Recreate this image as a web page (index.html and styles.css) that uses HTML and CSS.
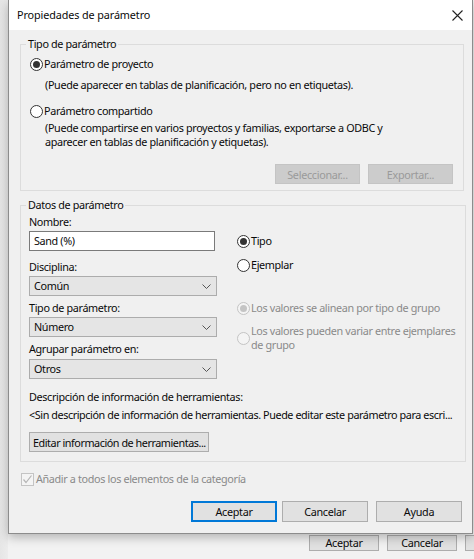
FILE: index.html
```html
<!DOCTYPE html>
<html lang="es">
<head>
    <meta charset="UTF-8">
    <title>Propiedades de parámetro</title>
    <link rel="stylesheet" href="styles.css">
</head>
<body>
    <div class="dialog">
        <div class="titlebar">
            <span class="title">Propiedades de parámetro</span>
            <svg class="close" width="11" height="11" viewBox="0 0 11 11">
                <path d="M0.5 0.5 L10.5 10.5 M10.5 0.5 L0.5 10.5" stroke="#222" stroke-width="1.1" fill="none"/>
            </svg>
        </div>

        <div class="dialog-body">
            <!-- Tipo de parámetro -->
            <fieldset class="group">
                <legend>Tipo de parámetro</legend>
                <div class="group-inner tipo">
                    <div class="radio-row">
                        <span class="radio checked"></span>
                        <span>Parámetro de proyecto</span>
                    </div>
                    <p class="desc desc-1">(Puede aparecer en tablas de planificación, pero no en etiquetas).</p>
                    <div class="radio-row row-2">
                        <span class="radio"></span>
                        <span>Parámetro compartido</span>
                    </div>
                    <p class="desc desc-2">(Puede compartirse en varios proyectos y familias, exportarse a ODBC y<br>aparecer en tablas de planificación y etiquetas).</p>
                    <div class="btn-row">
                        <button class="btn disabled">Seleccionar...</button>
                        <button class="btn disabled">Exportar...</button>
                    </div>
                </div>
            </fieldset>

            <!-- Datos de parámetro -->
            <fieldset class="group group-datos">
                <legend>Datos de parámetro</legend>
                <div class="group-inner datos">
                    <div class="cols">
                        <div class="col-left">
                            <div class="label">Nombre:</div>
                            <div class="textbox">Sand (%)</div>

                            <div class="label lbl-disciplina">Disciplina:</div>
                            <div class="select">
                                <span>Común</span>
                                <svg width="9" height="5" viewBox="0 0 9 5"><polyline points="0.5,0.5 4.5,4.5 8.5,0.5" stroke="#555" fill="none"/></svg>
                            </div>

                            <div class="label lbl-next">Tipo de parámetro:</div>
                            <div class="select">
                                <span>Número</span>
                                <svg width="9" height="5" viewBox="0 0 9 5"><polyline points="0.5,0.5 4.5,4.5 8.5,0.5" stroke="#555" fill="none"/></svg>
                            </div>

                            <div class="label lbl-next">Agrupar parámetro en:</div>
                            <div class="select select-last">
                                <span>Otros</span>
                                <svg width="9" height="5" viewBox="0 0 9 5"><polyline points="0.5,0.5 4.5,4.5 8.5,0.5" stroke="#555" fill="none"/></svg>
                            </div>
                        </div>

                        <div class="col-right">
                            <div class="radio-row">
                                <span class="radio checked"></span>
                                <span>Tipo</span>
                            </div>
                            <div class="radio-row row-ejemplar">
                                <span class="radio"></span>
                                <span>Ejemplar</span>
                            </div>
                            <div class="radio-row row-grupo1 off">
                                <span class="radio checked"></span>
                                <span>Los valores se alinean por tipo de grupo</span>
                            </div>
                            <div class="radio-row row-grupo2 off">
                                <span class="radio"></span>
                                <span class="two-lines">Los valores pueden variar entre ejemplares<br>de grupo</span>
                            </div>
                        </div>
                    </div>

                    <div class="label lbl-desc">Descripción de información de herramientas:</div>
                    <div class="label lbl-sin">&lt;Sin descripción de información de herramientas. Puede editar este parámetro para escri...</div>
                    <button class="btn btn-editar">Editar información de herramientas...</button>
                </div>
            </fieldset>

            <div class="check-row">
                <span class="checkbox">
                    <svg width="11" height="11" viewBox="0 0 11 11"><polyline points="1.5,5.5 4,8.5 9.5,1.5" stroke="#b5b5b5" stroke-width="1.2" fill="none"/></svg>
                </span>
                <span>Añadir a todos los elementos de la categoría</span>
            </div>

            <div class="footer">
                <button class="btn btn-ok">Aceptar</button>
                <button class="btn btn-cancel">Cancelar</button>
                <button class="btn btn-help">Ayuda</button>
            </div>
        </div>
    </div>

    <div class="back-buttons">
        <button class="btn btn-back">Aceptar</button>
        <button class="btn btn-back">Cancelar</button>
        <button class="btn btn-back btn-cut"></button>
    </div>
</body>
</html>
```

FILE: styles.css
```css
/* Reset básico */
* {
    margin: 0;
    padding: 0;
    box-sizing: border-box;
}

body {
    font-family: "Noto Sans", Arial, sans-serif;
    font-size: 10.8px;
    letter-spacing: -0.35px;
    line-height: 14px;
    color: #0a0a0a;
    background-color: #f2f2f2;
    width: 474px;
    height: 559px;
    overflow: hidden;
    background-image: linear-gradient(to right, #e6e6e6 0, #ececec 8px, #f2f2f2 8px);
}

/* Ventana */
.dialog {
    margin-left: 8px;
    width: 465px;
    background-color: #f0f0f0;
    border: 1px solid #8c8c8c;
    border-top: none;
    box-shadow: 0 3px 10px rgba(0, 0, 0, 0.28);
    position: relative;
}

.titlebar {
    height: 30px;
    background-color: #fff;
    display: flex;
    align-items: center;
    justify-content: space-between;
    padding: 0 9px 0 8px;
}

.title {
    letter-spacing: -0.1px;
}

.dialog-body {
    padding: 7px 8px 11px 11px;
}

/* Grupos */
.group {
    border: 1px solid #dcdcdc;
    padding: 0;
}

.group legend {
    margin-left: 5px;
    padding: 0 2px;
    line-height: 14px;
}

.group-datos {
    margin-top: 7px;
}

.group-inner.tipo {
    padding: 5px 10px 6px 9px;
}

.group-inner.datos {
    padding: 3px 10px 9px 8px;
}

.radio-row {
    display: flex;
    align-items: center;
    height: 16px;
    gap: 1px;
    white-space: nowrap;
}

.radio {
    width: 13px;
    height: 13px;
    border: 1px solid #333;
    border-radius: 50%;
    background-color: #fff;
    display: flex;
    align-items: center;
    justify-content: center;
    flex: none;
}

.radio.checked::after {
    content: "";
    width: 7px;
    height: 7px;
    border-radius: 50%;
    background-color: #333;
}

.off {
    color: #8a8a8a;
}

.off .radio {
    border-color: #c4c4c4;
    background-color: #f4f4f4;
}

.off .radio.checked::after {
    background-color: #c4c4c4;
}

.desc {
    margin-left: 15px;
    white-space: nowrap;
}

.desc-1 {
    margin-top: 6px;
}

.row-2 {
    margin-top: 11px;
}

.desc-2 {
    margin-top: 2px;
}

/* Botones */
.btn {
    font-family: inherit;
    font-size: 10.8px;
    letter-spacing: -0.3px;
    color: #0a0a0a;
    background-color: #e1e1e1;
    border: 1px solid #adadad;
    height: 21px;
    line-height: 19px;
    padding: 0 4px;
    white-space: nowrap;
}

.btn.disabled {
    background-color: #cccccc;
    border-color: #c4c4c4;
    color: #9a9a9a;
}

.btn-row {
    display: flex;
    justify-content: flex-end;
    gap: 8px;
    margin-top: 15px;
}

.btn-row .btn {
    width: 85px;
    height: 20px;
}

/* Datos */
.cols {
    display: flex;
}

.col-left {
    width: 188px;
}

.col-right {
    margin-left: 20px;
    padding-top: 18px;
}

.label {
    white-space: nowrap;
}

.lbl-sin {
    letter-spacing: -0.42px;
}

.textbox {
    margin-top: 2px;
    width: 186px;
    height: 20px;
    background-color: #fff;
    border: 1px solid #7a7a7a;
    padding: 0 4px;
    line-height: 18px;
}

.lbl-disciplina {
    margin-top: 9px;
}

.lbl-next {
    margin-top: 5px;
}

.select {
    margin-top: 2px;
    height: 20px;
    background-color: #e5e5e5;
    border: 1px solid #acacac;
    display: flex;
    align-items: center;
    justify-content: space-between;
    padding: 0 5px 0 4px;
}

.select-last {
    margin-top: 3px;
}

.row-ejemplar {
    margin-top: 8px;
}

.row-grupo1 {
    margin-top: 27px;
}

.row-grupo2 {
    margin-top: 8px;
    height: 28px;
}

.lbl-desc {
    margin-top: 11px;
}

.lbl-sin {
    margin-top: 4px;
}

.btn-editar {
    margin-top: 10px;
    width: 180px;
    height: 20px;
    text-align: left;
    padding: 0 3px;
    letter-spacing: -0.45px;
}

/* Casilla */
.check-row {
    display: flex;
    align-items: center;
    gap: 2px;
    height: 16px;
    margin-top: 9px;
    margin-left: 1px;
    color: #8a8a8a;
}

.checkbox {
    width: 13px;
    height: 13px;
    border: 1px solid #c4c4c4;
    background-color: #f4f4f4;
    display: flex;
    align-items: center;
    justify-content: center;
}

/* Pie */
.footer {
    display: flex;
    justify-content: flex-end;
    margin-top: 14px;
    padding-right: 2px;
}

.footer .btn {
    width: 86px;
}

.btn-ok {
    border-color: #0078d7;
    box-shadow: inset 0 0 0 1px #0078d7;
}

.btn-cancel {
    margin-left: 5px;
}

.btn-help {
    margin-left: 8px;
}

.back-buttons {
    display: flex;
    gap: 8px;
    margin-top: 1px;
    padding-left: 309px;
}

.btn-back {
    width: 70px;
    height: 16px;
    line-height: 14px;
    flex: none;
}

.btn-cut {
    width: 9px;
    border-right: none;
}
```
